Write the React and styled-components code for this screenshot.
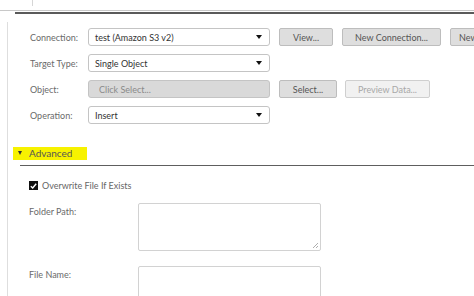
import React from "react";
import styled, { createGlobalStyle } from "styled-components";

const GlobalStyle = createGlobalStyle`
  html, body {
    margin: 0;
    padding: 0;
    background: #fff;
    overflow: hidden;
  }
  body {
    font-family: Lato, "Open Sans", sans-serif;
    font-size: 9px;
    color: #444;
  }
`;

const Page = styled.div`
  width: 474px;
  height: 296px;
  overflow: hidden;
  position: relative;
`;

const TopBar = styled.div`
  height: 10px;
  border-bottom: 1px solid #c8c8c8;
  position: relative;
`;

const Tick = styled.div`
  position: absolute;
  left: 32px;
  top: 0;
  width: 1px;
  height: 6px;
  background: #d6d6d6;
`;

const HeavyRule = styled.div`
  margin: 1px 0 0 15px;
  height: 2px;
  background: #5a5a5a;
`;

const Body = styled.div`
  margin: 8px 0 0 7px;
  border-left: 1px solid #dedede;
  padding: 6px 0 0 0;
  height: 400px;
`;

const Form = styled.div`
  padding-left: 22px;
  display: flex;
  flex-direction: column;
  gap: 8px;
`;

const Row = styled.div`
  display: flex;
  align-items: center;
  height: 18px;
  white-space: nowrap;
`;

const Label = styled.div`
  width: ${({ w }) => w || 58}px;
  flex: none;
  color: #6a6a6a;
`;

const SelectBox = styled.div`
  width: 182px;
  height: 18px;
  box-sizing: border-box;
  border: 1px solid #c4c4c4;
  border-radius: 3px;
  background: ${({ disabled }) => (disabled ? "#d9d9d9" : "#fff")};
  color: ${({ disabled }) => (disabled ? "#8a8a8a" : "#333")};
  display: flex;
  align-items: center;
  justify-content: space-between;
  padding: 0 7px 0 6px;
  flex: none;
  ${({ disabled }) => disabled && "padding-left: 10px;"}
`;

const Caret = styled.span`
  width: 0;
  height: 0;
  border-left: 3px solid transparent;
  border-right: 3px solid transparent;
  border-top: 4px solid #111;
`;

const Button = styled.div`
  margin-left: ${({ ml }) => ml || 9}px;
  width: ${({ w }) => w}px;
  height: 18px;
  box-sizing: border-box;
  flex: none;
  border: 1px solid ${({ disabled }) => (disabled ? "#cfcfcf" : "#bdbdbd")};
  border-radius: 2px;
  background: ${({ disabled }) => (disabled ? "#f1f1f1" : "#dedede")};
  color: ${({ disabled }) => (disabled ? "#a8a8a8" : "#555")};
  display: flex;
  align-items: center;
  justify-content: ${({ left }) => (left ? "flex-start" : "center")};
  padding-left: ${({ left }) => (left ? 8 : 0)}px;
  overflow: hidden;
`;

const Section = styled.div`
  margin-top: 22px;
  padding-left: 5px;
`;

const Toggle = styled.div`
  display: inline-flex;
  align-items: center;
  gap: 7px;
  width: 74px;
  height: 13px;
  box-sizing: border-box;
  padding-left: 5px;
  background: #f7f200;
  color: #555;
  font-size: 10px;
`;

const ToggleCaret = styled.span`
  width: 0;
  height: 0;
  border-left: 2.5px solid transparent;
  border-right: 2.5px solid transparent;
  border-top: 4px solid #333;
`;

const SectionRule = styled.div`
  margin: 5px 0 0 7px;
  height: 1px;
  background: #5e5e5e;
`;

const Advanced = styled.div`
  padding: 15px 0 0 21px;
`;

const CheckRow = styled.div`
  display: flex;
  align-items: center;
  gap: 4px;
  height: 10px;
  color: #666;
`;

const Box = styled.span`
  width: 9px;
  height: 9px;
  background: #111;
  display: flex;
  align-items: center;
  justify-content: center;
`;

const FieldRow = styled.div`
  display: flex;
  margin-top: ${({ mt }) => mt}px;
`;

const FieldLabel = styled.div`
  width: 109px;
  padding-top: 3px;
  color: #6a6a6a;
`;

const Area = styled.div`
  width: 183px;
  height: ${({ h }) => h}px;
  box-sizing: border-box;
  border: 1px solid #d2d2d2;
  border-radius: 2px;
  position: relative;
`;

const Grip = styled.svg`
  position: absolute;
  right: 1px;
  bottom: 1px;
`;

export default function App() {
  return (
    <Page>
      <GlobalStyle />
      <TopBar>
        <Tick />
      </TopBar>
      <HeavyRule />
      <Body>
        <Form>
          <Row>
            <Label>Connection:</Label>
            <SelectBox>
              <span>test (Amazon S3 v2)</span>
              <Caret />
            </SelectBox>
            <Button w={54}>View...</Button>
            <Button w={99}>New Connection...</Button>
            <Button w={40} left>
              New
            </Button>
          </Row>
          <Row>
            <Label>Target Type:</Label>
            <SelectBox>
              <span>Single Object</span>
              <Caret />
            </SelectBox>
          </Row>
          <Row>
            <Label>Object:</Label>
            <SelectBox disabled>
              <span>Click Select...</span>
            </SelectBox>
            <Button w={58}>Select...</Button>
            <Button w={85} ml={8} disabled>
              Preview Data...
            </Button>
          </Row>
          <Row>
            <Label>Operation:</Label>
            <SelectBox>
              <span>Insert</span>
              <Caret />
            </SelectBox>
          </Row>
        </Form>
        <Section>
          <Toggle>
            <ToggleCaret />
            Advanced
          </Toggle>
          <SectionRule />
        </Section>
        <Advanced>
          <CheckRow>
            <Box>
              <svg width="7" height="6" viewBox="0 0 7 6">
                <path d="M0.8 3.2 L2.7 5 L6.2 0.8" stroke="#fff" strokeWidth="1.4" fill="none" />
              </svg>
            </Box>
            Overwrite File If Exists
          </CheckRow>
          <FieldRow mt={12}>
            <FieldLabel>Folder Path:</FieldLabel>
            <Area h={48}>
              <Grip width="7" height="7" viewBox="0 0 7 7">
                <path d="M6 1 L1 6 M6 4 L4 6" stroke="#999" strokeWidth="0.8" />
              </Grip>
            </Area>
          </FieldRow>
          <FieldRow mt={15}>
            <FieldLabel>File Name:</FieldLabel>
            <Area h={40} />
          </FieldRow>
        </Advanced>
      </Body>
    </Page>
  );
}
